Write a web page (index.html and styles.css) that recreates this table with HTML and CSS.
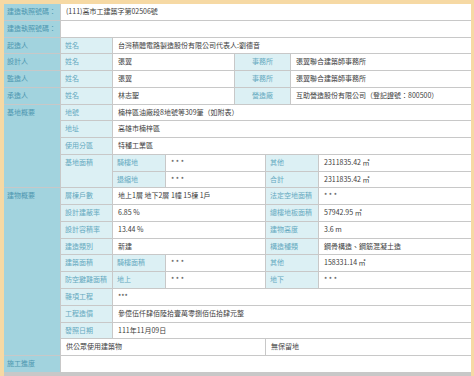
FILE: index.html
```html
<!DOCTYPE html>
<html lang="zh-Hant">
<head>
<meta charset="utf-8">
<link rel="stylesheet" href="styles.css">
</head>
<body>
<div class="frame">
  <div class="sheet">
    <div class="h c1">建造執照號碼：</div><div class="v s-b-h">(111)高市工建築字第02506號</div>
    <div class="h c1">建造執照號碼：</div><div class="v s-b-h"></div>

    <div class="h c1">起造人</div><div class="l">姓名</div><div class="v s-c-h">台灣積體電路製造股份有限公司代表人:劉德音</div>

    <div class="h c1">設計人</div><div class="l">姓名</div><div class="v s-c-d">張翼</div><div class="l s-e-f mid">事務所</div><div class="v s-g-h">張翼聯合建築師事務所</div>
    <div class="h c1">監造人</div><div class="l">姓名</div><div class="v s-c-d">張翼</div><div class="l s-e-f mid">事務所</div><div class="v s-g-h">張翼聯合建築師事務所</div>
    <div class="h c1">承造人</div><div class="l">姓名</div><div class="v s-c-d">林志聖</div><div class="l s-e-f mid">營造廠</div><div class="v s-g-h">互助營造股份有限公司（登記證號：800500）</div>

    <div class="h c1 rs5">基地概要</div>
    <div class="l">地號</div><div class="v s-c-h">楠梓區油廠段8地號等309筆（如附表）</div>
    <div class="l">地址</div><div class="v s-c-h">高雄市楠梓區</div>
    <div class="l">使用分區</div><div class="v s-c-h">特種工業區</div>
    <div class="l rs2">基地面積</div><div class="l">騎樓地</div><div class="v s-d-e">* * *</div><div class="l s-f-g">其他</div><div class="v">2311835.42 ㎡</div>
    <div class="l">退縮地</div><div class="v s-d-e">* * *</div><div class="l s-f-g">合計</div><div class="v">2311835.42 ㎡</div>

    <div class="h c1 rs10">建物概要</div>
    <div class="l">層棟戶數</div><div class="v s-c-e">地上1層 地下2層 1幢 15棟 1戶</div><div class="l s-f-g">法定空地面積</div><div class="v">* * *</div>
    <div class="l">設計建蔽率</div><div class="v s-c-e">6.85 %</div><div class="l s-f-g">總樓地板面積</div><div class="v">57942.95 ㎡</div>
    <div class="l">設計容積率</div><div class="v s-c-e">13.44 %</div><div class="l s-f-g">建物高度</div><div class="v">3.6 m</div>
    <div class="l">建造類別</div><div class="v s-c-e">新建</div><div class="l s-f-g">構造種類</div><div class="v">鋼骨構造、鋼筋混凝土造</div>
    <div class="l">建築面積</div><div class="l">騎樓面積</div><div class="v s-d-e">* * *</div><div class="l s-f-g">其他</div><div class="v">158331.14 ㎡</div>
    <div class="l">防空避難面積</div><div class="l">地上</div><div class="v s-d-e">* * *</div><div class="l s-f-g">地下</div><div class="v">* * *</div>
    <div class="l">雜項工程</div><div class="v s-c-h">***</div>
    <div class="l">工程造價</div><div class="v s-c-h">參億伍仟肆佰陸拾壹萬零捌佰伍拾肆元整</div>
    <div class="l">發照日期</div><div class="v s-c-h">111年11月09日</div>
    <div class="v s-b-e">供公眾使用建築物</div><div class="v s-f-h">無保留地</div>

    <div class="h c1">施工進度</div><div class="v s-b-h"></div>
  </div>
</div>
</body>
</html>
```

FILE: styles.css
```css
html, body {
  margin: 0;
  padding: 0;
  background: #f6d9a4;
}

.frame {
  padding: 4px 3px 0 4px;
  height: 376px;
  box-sizing: border-box;
  overflow: hidden;
}

.sheet {
  display: grid;
  grid-template-columns: 56px 51px 52px 68px 30px 24px 27px 152px;
  grid-template-rows: repeat(22, 15.77px);
  gap: 1px;
  background: #c8c8c8;
  padding-bottom: 4px;
  font-family: "Noto Sans CJK TC", "Noto Sans", sans-serif;
  font-size: 7px;
  line-height: 15.77px;
  white-space: nowrap;
}

.sheet > div {
  overflow: hidden;
}

.h {
  background: #a2d3de;
  color: #4d97b0;
  padding-left: 3px;
}

.c1 { grid-column: 1; }

.l {
  background: #dcf0f4;
  color: #64a9bf;
  padding-left: 4px;
}

.l.mid {
  padding-left: 0;
  text-align: center;
}

.v {
  background: #ffffff;
  color: #3c3c3c;
  padding-left: 5px;
}

.rs5 { grid-row: span 5; }
.rs10 { grid-row: span 10; }
.rs2 { grid-row: span 2; }

.s-b-h { grid-column: 2 / 9; }
.s-c-h { grid-column: 3 / 9; }
.s-c-d { grid-column: 3 / 5; }
.s-e-f { grid-column: 5 / 7; }
.s-g-h { grid-column: 7 / 9; }
.s-d-e { grid-column: 4 / 6; }
.s-f-g { grid-column: 6 / 8; }
.s-c-e { grid-column: 3 / 6; }
.s-b-e { grid-column: 2 / 6; }
.s-f-h { grid-column: 6 / 9; }
```
